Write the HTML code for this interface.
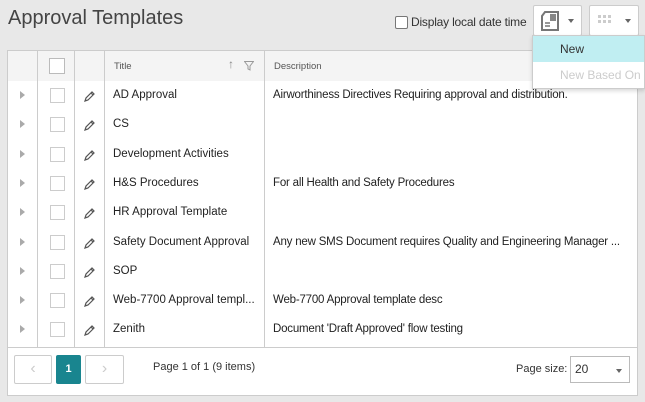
<!DOCTYPE html>
<html><head><style>
*{box-sizing:border-box}
body{margin:0;width:645px;height:402px;background:#e8e8e8;font-family:"Liberation Sans",sans-serif;color:#333;position:relative;overflow:hidden}
.title{position:absolute;left:8px;top:7px;font-size:20px;color:#444}
.ldt{position:absolute;left:395px;top:15px;font-size:12px;color:#333;display:flex;align-items:center;letter-spacing:-0.2px}
.cb{width:13px;height:13px;border:1px solid #777;background:#fff;margin-right:3px;border-radius:2px}
.btn{position:absolute;top:5px;height:31px;border:1px solid #ccc;background:#fff;border-radius:2px}
.caret{position:absolute;right:7px;top:13px;width:0;height:0;border-left:3px solid transparent;border-right:3px solid transparent;border-top:4px solid #666}
.menu{position:absolute;left:532px;top:35px;width:113px;height:54px;background:#fff;border:1px solid #ccc;box-shadow:0 2px 4px rgba(0,0,0,.15)}
.menu div{height:26px;line-height:26px;padding-left:27px;font-size:12px;white-space:nowrap}
.grid{position:absolute;left:7px;top:50px;width:631px;height:346px;background:#fff;border:1px solid #ccc}
.hdr{position:absolute;left:0;top:0;width:100%;height:30px;background:#f4f4f4}
.vl{position:absolute;top:0;height:296px;width:1px;background:#ccc}
.row{position:absolute;left:0;height:29px;width:100%;font-size:11.5px;color:#222;white-space:nowrap}
.row span{position:absolute;top:8px}
.tri{position:absolute;left:12px;top:10px;border-top:4px solid transparent;border-bottom:4px solid transparent;border-left:5px solid #aaa}
.sq{position:absolute;left:42px;top:7px;width:15px;height:15px;border:1px solid #ccc}
.foot{position:absolute;left:0;top:296px;width:100%;height:1px;background:#ccc}
.pb{position:absolute;top:304px;height:29px;border:1px solid #ccc;background:#fff;border-radius:2px}
</style></head><body>
<div class="title">Approval Templates</div>
<div class="ldt"><div class="cb"></div>Display local date time</div>
<div class="btn" style="left:533px;width:49px">
<svg width="22" height="22" viewBox="0 0 22 22" style="position:absolute;left:6px;top:4px"><path d="M5 2h13v18H2V6z" fill="#fff" stroke="#777" stroke-width="2"/><rect x="10" y="4" width="6" height="7" fill="#888"/><path d="M5 13h5M5 16h5" stroke="#777" stroke-width="1.5"/></svg>
<div class="caret"></div></div>
<div class="btn" style="left:589px;width:50px">
<svg width="14" height="12" style="position:absolute;left:8px;top:9px" fill="#ccc"><rect x="0" y="0" width="3" height="3"/><rect x="5" y="0" width="3" height="3"/><rect x="10" y="0" width="3" height="3"/><rect x="0" y="5" width="3" height="3"/><rect x="5" y="5" width="3" height="3"/><rect x="10" y="5" width="3" height="3"/></svg>
<div class="caret"></div></div>
<div class="grid">
<div class="hdr"></div>
<div class="vl" style="left:29px"></div><div class="vl" style="left:66px"></div><div class="vl" style="left:96px"></div><div class="vl" style="left:256px"></div>
<div style="position:absolute;left:41px;top:7px;width:16px;height:16px;border:1px solid #bbb;background:#fff"></div>
<div style="position:absolute;left:106px;top:10px;font-size:9.5px;color:#555">Title</div>
<div style="position:absolute;left:220px;top:6px;font-size:12px;color:#888">↑</div>
<svg width="10" height="10" style="position:absolute;left:236px;top:10px"><path d="M0.5 0.5h9L6 5v4L4 8V5z" fill="none" stroke="#999"/></svg>
<div style="position:absolute;left:266px;top:10px;font-size:9.5px;color:#555">Description</div>
<div class="foot"></div>
<div class="pb" style="left:6px;width:38px;color:#ccc;font-size:16px;text-align:center;line-height:26px">‹</div>
<div style="position:absolute;left:48px;top:304px;width:25px;height:29px;background:#19858f;border-radius:2px;color:#fff;font-size:11px;font-weight:bold;text-align:center;line-height:29px">1</div>
<div class="pb" style="left:77px;width:39px;color:#ccc;font-size:16px;text-align:center;line-height:26px">›</div>
<div style="position:absolute;left:145px;top:310px;font-size:11px;color:#333">Page 1 of 1 (9 items)</div>
<div style="position:absolute;left:508px;top:312px;font-size:11px;color:#333">Page size:</div>
<div style="position:absolute;left:562px;top:305px;width:60px;height:27px;border:1px solid #bbb;font-size:12px;padding:5px 4px">20<div class="caret" style="top:12px"></div></div>
</div>
<div class="menu"><div style="background:#c0eef2">New</div><div style="color:#ccc">New Based On</div></div>
<div id="rows"></div>
<script>
var d=[["AD Approval","Airworthiness Directives Requiring approval and distribution."],["CS",""],["Development Activities",""],["H&S Procedures","For all Health and Safety Procedures"],["HR Approval Template",""],["Safety Document Approval","Any new SMS Document requires Quality and Engineering Manager ..."],["SOP",""],["Web-7700 Approval templ...","Web-7700 Approval template desc"],["Zenith","Document 'Draft Approved' flow testing"]];
var h="";d.forEach(function(r,i){var t=51+30+i*29.3;h+='<div class="row" style="left:8px;width:629px;top:'+t+'px"><div class="tri"></div><div class="sq"></div><svg width="12" height="12" style="position:absolute;left:76px;top:9px"><path d="M1 11l1-3 6-6 2 2-6 6z M7 3l2 2" fill="none" stroke="#555" stroke-width="1.2"/></svg><span style="left:105px">'+r[0].replace("&","&amp;")+'</span><span style="left:265px;letter-spacing:-0.2px">'+r[1]+'</span></div>'});
document.getElementById("rows").innerHTML=h;
</script>
</body></html>
